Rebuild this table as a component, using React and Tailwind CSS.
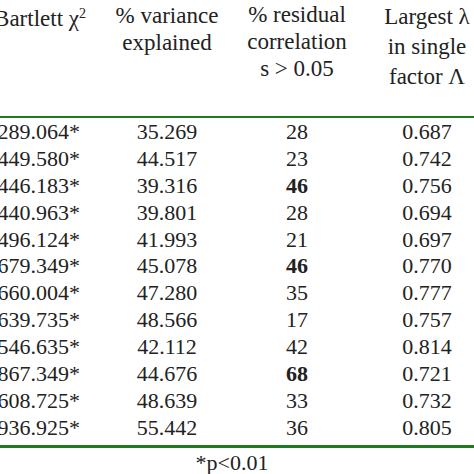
import React from 'react';

const rows = [
  ['289.064*', '35.269', '28', '0.687'],
  ['449.580*', '44.517', '23', '0.742'],
  ['446.183*', '39.316', '46', '0.756', true],
  ['440.963*', '39.801', '28', '0.694'],
  ['496.124*', '41.993', '21', '0.697'],
  ['679.349*', '45.078', '46', '0.770', true],
  ['660.004*', '47.280', '35', '0.777'],
  ['639.735*', '48.566', '17', '0.757'],
  ['546.635*', '42.112', '42', '0.814'],
  ['867.349*', '44.676', '68', '0.721', true],
  ['608.725*', '48.639', '33', '0.732'],
  ['936.925*', '55.442', '36', '0.805'],
];

const App = () => {
  return (
    <div className="w-[474px] h-[474px] overflow-hidden bg-white text-[#222] text-[22px] font-['Liberation_Serif']">
      <div className="ml-[-28px] w-[520px]">
        {/* header */}
        <div className="grid grid-cols-[130px_130px_130px_130px] h-[116px] leading-[27px] text-[23px]">
          <div className="text-right pr-[16px] pt-[5px] whitespace-nowrap">
            Bartlett χ<span className="relative top-[-8px] text-[14px] leading-none">2</span>
          </div>
          <div className="text-center pt-[2px]">
            <div>% variance</div>
            <div>explained</div>
          </div>
          <div className="text-center pt-[1px]">
            <div>% residual</div>
            <div>correlation</div>
            <div>s &gt; 0.05</div>
          </div>
          <div className="text-center leading-[30px] pt-[2px]">
            <div>Largest λ</div>
            <div>in single</div>
            <div>factor Λ</div>
          </div>
        </div>

        <div className="border-t-2 border-[#1f7a1f] pt-[1px] pb-[3px]">
          {rows.map((r, i) => (
            <div key={i} className="grid grid-cols-[130px_130px_130px_130px] h-[26.9px] leading-[26.9px]">
              <div className="text-right pr-[22px]">{r[0]}</div>
              <div className="text-center">{r[1]}</div>
              <div className={r[4] ? 'text-center font-bold' : 'text-center'}>{r[2]}</div>
              <div className="text-center">{r[3]}</div>
            </div>
          ))}
        </div>

        <div className="border-t-[3px] border-[#1f7a1f] text-center leading-[30px]">
          *p&lt;0.01
        </div>
      </div>
    </div>
  );
};

export default App;
